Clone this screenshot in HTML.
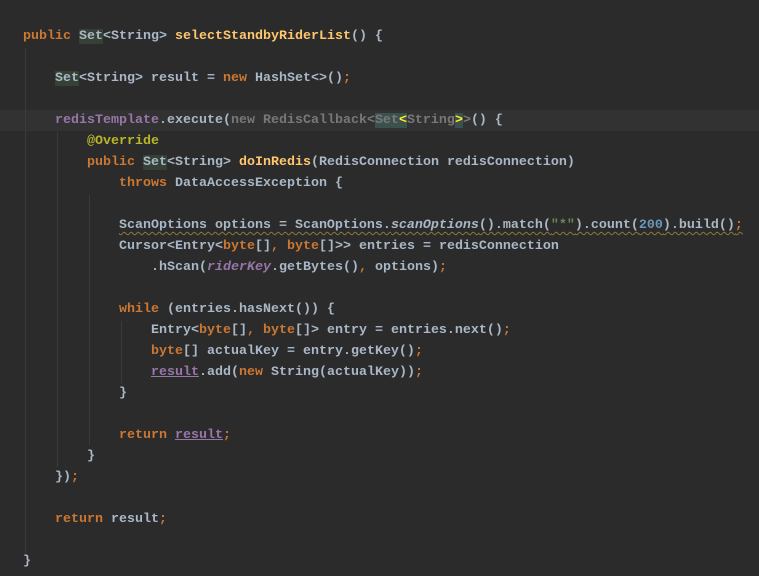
<!DOCTYPE html>
<html><head><meta charset="utf-8"><style>
html,body{margin:0;padding:0;background:#2b2b2b;width:759px;height:576px;overflow:hidden}
#c{position:absolute;left:0;top:26px;width:759px;font-family:"Liberation Mono",monospace;font-size:13.33px;line-height:21px;color:#a9b7c6;font-weight:bold}
.l{height:21px;padding-left:23px;position:relative;white-space:pre}
.cur{background:#323232}
.k{color:#cc7832}.m{color:#ffc66d}.f{color:#9876aa}.a{color:#bbb529}.n{color:#6897bb}.s{color:#6a8759}
.g{color:#787878}.h{background:#344134}.y{color:#ffef28;background:#3b514d}.gh{background:#3b514d}
.i{font-style:italic}.u{text-decoration:underline}
.w{text-decoration:underline wavy #8a7a3a;text-decoration-thickness:1px;text-underline-offset:3px}
.guide{position:absolute;width:1px;background:#3b3b3b;z-index:1}
</style></head><body>
<div id="c">
<div class="l"><span class="k">public </span><span class="h">Set</span>&lt;String&gt; <span class="m">selectStandbyRiderList</span>() {</div>
<div class="l"> </div>
<div class="l">    <span class="h">Set</span>&lt;String&gt; result = <span class="k">new </span>HashSet&lt;&gt;()<span class="k">;</span></div>
<div class="l"> </div>
<div class="l cur">    <span class="f">redisTemplate</span>.execute(<span class="g">new RedisCallback&lt;<span class="gh">Set</span><span class="y">&lt;</span>String<span class="y">&gt;</span>&gt;</span>() {</div>
<div class="l">        <span class="a">@Override</span></div>
<div class="l">        <span class="k">public </span><span class="h">Set</span>&lt;String&gt; <span class="m">doInRedis</span>(RedisConnection redisConnection)</div>
<div class="l">            <span class="k">throws </span>DataAccessException {</div>
<div class="l"> </div>
<div class="l">            <span class="w">ScanOptions options = ScanOptions.<span class="i">scanOptions</span>().match(<span class="s">"*"</span>).count(<span class="n">200</span>).build()<span class="k">;</span></span></div>
<div class="l">            Cursor&lt;Entry&lt;<span class="k">byte</span>[]<span class="k">, byte</span>[]&gt;&gt; entries = redisConnection</div>
<div class="l">                .hScan(<span class="f i">riderKey</span>.getBytes()<span class="k">, </span>options)<span class="k">;</span></div>
<div class="l"> </div>
<div class="l">            <span class="k">while </span>(entries.hasNext()) {</div>
<div class="l">                Entry&lt;<span class="k">byte</span>[]<span class="k">, byte</span>[]&gt; entry = entries.next()<span class="k">;</span></div>
<div class="l">                <span class="k">byte</span>[] actualKey = entry.getKey()<span class="k">;</span></div>
<div class="l">                <span class="f u">result</span>.add(<span class="k">new </span>String(actualKey))<span class="k">;</span></div>
<div class="l">            }</div>
<div class="l"> </div>
<div class="l">            <span class="k">return </span><span class="f u">result</span><span class="k">;</span></div>
<div class="l">        }</div>
<div class="l">    })<span class="k">;</span></div>
<div class="l"> </div>
<div class="l">    <span class="k">return </span>result<span class="k">;</span></div>
<div class="l"> </div>
<div class="l">}</div>
</div>
<div class="guide" style="left:25px;top:48px;height:505px"></div>
<div class="guide" style="left:57px;top:132px;height:335px"></div>
<div class="guide" style="left:89px;top:195px;height:250px"></div>
<div class="guide" style="left:121px;top:321px;height:63px"></div>
</body></html>
